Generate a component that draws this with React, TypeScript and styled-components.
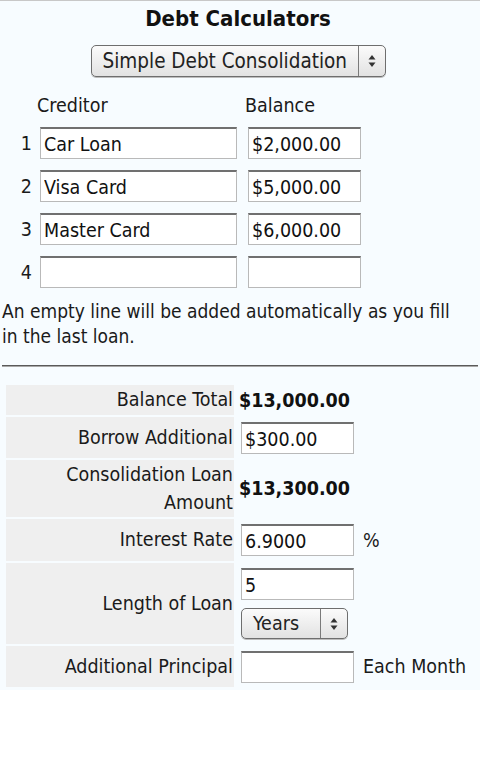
import React from "react";
import styled, { createGlobalStyle } from "styled-components";

const Global = createGlobalStyle`
  html, body { margin: 0; padding: 0; background: #ffffff; }
  body { font-family: "DejaVu Sans Condensed", "DejaVu Sans", Tahoma, sans-serif; color: #111; }
`;

const FONT = `"DejaVu Sans Condensed", "DejaVu Sans", Tahoma, sans-serif`;

const Page = styled.div`
  background: #f7fcff;
  border-top: 1px solid #c8c8c8;
  padding: 0 2px 3px 2px;
  font-family: ${FONT};
  font-size: 19.5px;
  color: #1a1a1a;
`;

const Title = styled.h1`
  margin: 0;
  padding: 6px 4px 0 0;
  text-align: center;
  font-size: 22px;
  font-weight: bold;
  line-height: 24px;
  color: #111;
`;

const SelectRow = styled.div`
  display: flex;
  justify-content: center;
  padding-top: 14px;
  padding-right: 4px;
`;

const FakeSelect = styled.div<{ $w: number; $h: number; $fs: number }>`
  display: flex;
  align-items: stretch;
  width: ${(p) => p.$w}px;
  height: ${(p) => p.$h}px;
  box-sizing: border-box;
  border: 1px solid #6e6e6e;
  border-radius: 5px;
  background: linear-gradient(#fbfbfb, #e2e2e2);
  box-shadow: 0 1px 0 #bdbdbd;
  font-family: ${FONT};
  font-size: ${(p) => p.$fs}px;
  color: #222;
`;

const SelectText = styled.div`
  flex: 1;
  display: flex;
  align-items: center;
  padding-left: 11px;
  white-space: nowrap;
  overflow: hidden;
`;

const SelectArrow = styled.div`
  width: 26px;
  border-left: 1px solid #7a7a7a;
  display: flex;
  align-items: center;
  justify-content: center;
`;

const Arrows = () => (
  <svg width="8" height="14" viewBox="0 0 8 14">
    <path d="M4 1 L7.5 5.5 L0.5 5.5 Z" fill="#333" />
    <path d="M4 13 L7.5 8.5 L0.5 8.5 Z" fill="#333" />
  </svg>
);

const LoanGrid = styled.div`
  display: grid;
  grid-template-columns: 27px 197px 113px;
  column-gap: 11px;
  row-gap: 11px;
  align-items: center;
  margin-top: 18px;
`;

const HeadCell = styled.div<{ $shift?: number }>`
  line-height: 22px;
  margin-left: ${(p) => p.$shift ?? 0}px;
  margin-bottom: -1px;
`;

const Num = styled.div`
  text-align: right;
  margin-right: -3px;
`;

const TextInput = styled.input<{ $w?: number }>`
  box-sizing: border-box;
  width: ${(p) => (p.$w ? `${p.$w}px` : "100%")};
  height: 32px;
  margin: 0;
  padding: 2px 3px 0 3px;
  border: 1px solid #b9b9b9;
  border-top: 2px solid #707070;
  background: #ffffff;
  font-family: ${FONT};
  font-size: 19.5px;
  color: #111;
  outline: none;
`;

const Note = styled.p`
  margin: 11px 0 0 0;
  padding-right: 16px;
  font-size: 19px;
  line-height: 25px;
`;

const Rule = styled.hr`
  margin: 16px 0 0 0;
  border: 0;
  border-top: 1px solid #5a5a5a;
  border-bottom: 1px solid #a8a8a8;
`;

const SummaryGrid = styled.div`
  display: grid;
  grid-template-columns: 228px 1fr;
  column-gap: 2px;
  row-gap: 2px;
  margin: 18px 4px 0 4px;
`;

const LabelCell = styled.div<{ $h: number }>`
  background: #efefef;
  height: ${(p) => p.$h}px;
  display: flex;
  align-items: center;
  justify-content: flex-end;
  text-align: right;
  padding-right: 1px;
  line-height: 28px;
  white-space: nowrap;
`;

const ValueCell = styled.div`
  display: flex;
  align-items: center;
  gap: 9px;
  padding-left: 3px;
`;

const ValueStack = styled.div`
  display: flex;
  flex-direction: column;
  gap: 8px;
  padding-left: 3px;
  justify-content: center;
`;

const Amount = styled.div`
  font-size: 19.5px;
  font-weight: bold;
  color: #111;
`;

const Suffix = styled.span``;

const SmallInput = styled(TextInput)`
  width: 113px;
  margin-left: 2px;
`;

const YearsSelect = styled(FakeSelect)`
  margin-left: 2px;
`;

const loans = [
  { n: "1", name: "Car Loan", bal: "$2,000.00" },
  { n: "2", name: "Visa Card", bal: "$5,000.00" },
  { n: "3", name: "Master Card", bal: "$6,000.00" },
  { n: "4", name: "", bal: "" },
];

export default function App() {
  return (
    <>
      <Global />
      <Page>
        <Title>Debt Calculators</Title>
        <SelectRow>
          <FakeSelect $w={295} $h={32} $fs={20.5}>
            <SelectText>Simple Debt Consolidation</SelectText>
            <SelectArrow>
              <Arrows />
            </SelectArrow>
          </FakeSelect>
        </SelectRow>
        <LoanGrid>
          <div />
          <HeadCell $shift={-3}>Creditor</HeadCell>
          <HeadCell $shift={-3}>Balance</HeadCell>
          {loans.map((l) => (
            <React.Fragment key={l.n}>
              <Num>{l.n}</Num>
              <TextInput defaultValue={l.name} />
              <TextInput defaultValue={l.bal} />
            </React.Fragment>
          ))}
        </LoanGrid>
        <Note>
          An empty line will be added automatically as you fill in the last loan.
        </Note>
        <Rule />
        <SummaryGrid>
          <LabelCell $h={30}>Balance Total</LabelCell>
          <ValueCell>
            <Amount>$13,000.00</Amount>
          </ValueCell>

          <LabelCell $h={41}>Borrow Additional</LabelCell>
          <ValueCell>
            <SmallInput defaultValue="$300.00" />
          </ValueCell>

          <LabelCell $h={57}>
            Consolidation Loan
            <br />
            Amount
          </LabelCell>
          <ValueCell>
            <Amount>$13,300.00</Amount>
          </ValueCell>

          <LabelCell $h={42}>Interest Rate</LabelCell>
          <ValueCell>
            <SmallInput defaultValue="6.9000" />
            <Suffix>%</Suffix>
          </ValueCell>

          <LabelCell $h={81}>Length of Loan</LabelCell>
          <ValueStack>
            <SmallInput defaultValue="5" />
            <YearsSelect $w={107} $h={31} $fs={19.5}>
              <SelectText>Years</SelectText>
              <SelectArrow>
                <Arrows />
              </SelectArrow>
            </YearsSelect>
          </ValueStack>

          <LabelCell $h={41}>Additional Principal</LabelCell>
          <ValueCell>
            <SmallInput defaultValue="" />
            <Suffix>Each Month</Suffix>
          </ValueCell>
        </SummaryGrid>
      </Page>
    </>
  );
}
